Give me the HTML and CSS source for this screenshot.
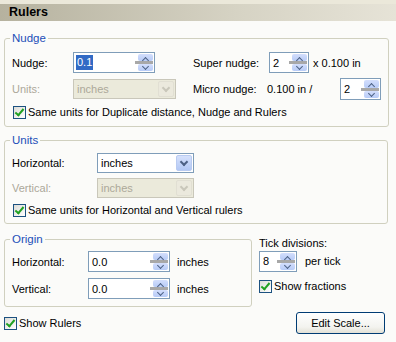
FILE: index.html
```html
<!DOCTYPE html>
<html>
<head>
    <meta charset='utf-8'>
    <title>Rulers</title>
    <link rel="stylesheet" href="styles.css">
</head>
<body>
    <div class="header">Rulers</div>

    <div class="content">
        <fieldset class="group nudge">
            <legend>Nudge</legend>
            <div class="row r-first">
                <span class="lbl w-nudge">Nudge:</span>
                <div class="field w82"><span class="hilite">0.1</span>
                    <div class="spin"><div class="up"></div><div class="mid"></div><div class="down"></div></div>
                </div>
                <span class="lbl w-super">Super nudge:</span>
                <div class="field w40"><span class="val">2</span>
                    <div class="spin"><div class="up"></div><div class="mid"></div><div class="down"></div></div>
                </div>
                <span class="after">x 0.100 in</span>
            </div>
            <div class="row r-second">
                <span class="lbl w-nudge disabled">Units:</span>
                <div class="combo combo-off w103"><span class="val">inches</span><div class="drop"></div></div>
                <span class="lbl w-micro">Micro nudge:</span>
                <span class="lbl w-ratio">0.100 in /</span>
                <div class="field w41 tall"><span class="val">2</span>
                    <div class="spin"><div class="up"></div><div class="mid"></div><div class="down"></div></div>
                </div>
            </div>
            <div class="row check-row">
                <span class="check"></span>
                <span>Same units for Duplicate distance, Nudge and Rulers</span>
            </div>
        </fieldset>

        <fieldset class="group units">
            <legend>Units</legend>
            <div class="row r-units">
                <span class="lbl w-units">Horizontal:</span>
                <div class="combo w97"><span class="val">inches</span><div class="drop"></div></div>
            </div>
            <div class="row r-units next">
                <span class="lbl w-units disabled">Vertical:</span>
                <div class="combo combo-off w97"><span class="val">inches</span><div class="drop"></div></div>
            </div>
            <div class="row check-row">
                <span class="check"></span>
                <span>Same units for Horizontal and Vertical rulers</span>
            </div>
        </fieldset>

        <div class="lower">
            <fieldset class="group origin">
                <legend>Origin</legend>
                <div class="row r-origin">
                    <span class="lbl w-origin">Horizontal:</span>
                    <div class="field w82"><span class="val">0.0</span>
                        <div class="spin"><div class="up"></div><div class="mid"></div><div class="down"></div></div>
                    </div>
                    <span class="unit">inches</span>
                </div>
                <div class="row r-origin next">
                    <span class="lbl w-origin">Vertical:</span>
                    <div class="field w82"><span class="val">0.0</span>
                        <div class="spin"><div class="up"></div><div class="mid"></div><div class="down"></div></div>
                    </div>
                    <span class="unit">inches</span>
                </div>
            </fieldset>

            <div class="ticks">
                <div class="tick-title">Tick divisions:</div>
                <div class="row r-tick">
                    <div class="field w38"><span class="val">8</span>
                        <div class="spin"><div class="up"></div><div class="mid"></div><div class="down"></div></div>
                    </div>
                    <span class="unit">per tick</span>
                </div>
                <div class="row check-row tick-check">
                    <span class="check"></span>
                    <span>Show fractions</span>
                </div>
            </div>
        </div>

        <div class="bottom">
            <div class="row check-row">
                <span class="check"></span>
                <span>Show Rulers</span>
            </div>
            <button class="btn">Edit Scale...</button>
        </div>
    </div>
</body>
</html>
```

FILE: styles.css
```css
* {
    box-sizing: border-box;
}
body {
    margin: 0;
    width: 396px;
    height: 342px;
    overflow: hidden;
    background: #fbfbf9;
    font-family: "Liberation Sans", Arial, sans-serif;
    font-size: 11px;
    color: #000;
}

.header {
    height: 21px;
    border-top: 4px solid #ebe8da;
    padding-left: 9px;
    background: linear-gradient(to right, #b6b29f, #d6d3c4 60%, #e6e3d7);
    font-size: 12.5px;
    font-weight: bold;
    line-height: 17px;
}

.content {
    padding: 0 8px 0 4px;
}

.group {
    margin: 0;
    border: 1px solid #d0d0bf;
    border-radius: 3px;
    padding: 0 7px;
}

.group legend {
    margin-left: -2px;
    padding: 0 2px;
    line-height: 14px;
    color: #1c4fb8;
    font-size: 11.5px;
}

.nudge {
    margin-top: 10px;
    padding-top: 7px;
    padding-bottom: 5px;
}

.units {
    margin-top: 6px;
    padding-top: 6px;
    padding-bottom: 4px;
}

.row {
    display: flex;
    align-items: center;
}

.r-first {
    height: 21px;
}

.r-second {
    height: 22px;
    margin-top: 5px;
}

.r-units {
    height: 20px;
}

.r-units.next {
    margin-top: 5px;
}

.check-row {
    height: 18px;
    margin-top: 3px;
}

.lbl {
    flex-shrink: 0;
}

.w-nudge { width: 61px; }
.w-super { width: 76px; margin-left: 38px; }
.w-micro { width: 74px; margin-left: 17px; }
.w-ratio { width: 73px; }
.w-units { width: 85px; }
.w-origin { width: 76px; }

.disabled {
    color: #aca899;
}

.after {
    margin-left: 4px;
}

.unit {
    margin-left: 7px;
}

/* text boxes with spinners */
.field {
    position: relative;
    height: 21px;
    border: 1px solid #7f9db9;
    background: #fff;
    display: flex;
    align-items: center;
    padding-left: 2px;
}

.field.tall {
    height: 22px;
}

.w82 { width: 82px; }
.w40 { width: 40px; }
.w41 { width: 41px; }
.w38 { width: 38px; }
.w103 { width: 103px; }
.w97 { width: 97px; }

.val {
    padding-left: 1px;
}

.hilite {
    background: #316ac5;
    color: #fff;
    padding: 1px 1px;
    line-height: 13px;
}

.spin {
    position: absolute;
    right: 1px;
    top: 1px;
    bottom: 1px;
    width: 15px;
    display: flex;
    flex-direction: column;
}

.spin .up,
.spin .down {
    flex: 1;
    background: linear-gradient(#d3defc, #b7cbf7);
    border-radius: 2px;
    position: relative;
}

.spin .mid {
    height: 3px;
    margin-left: -3px;
    background: #a8a8a8;
}

.spin .up::after,
.spin .down::after {
    content: "";
    position: absolute;
    left: 5px;
    width: 4px;
    height: 4px;
    border-left: 1.5px solid #4d6185;
    border-top: 1.5px solid #4d6185;
}

.spin .up::after {
    top: 4px;
    transform: rotate(45deg);
}

.spin .down::after {
    top: 0;
    transform: rotate(225deg);
}

/* drop-down boxes */
.combo {
    position: relative;
    height: 20px;
    border: 1px solid #7f9db9;
    background: #fff;
    display: flex;
    align-items: center;
    padding-left: 2px;
}

.combo .drop {
    position: absolute;
    right: 1px;
    top: 1px;
    width: 16px;
    height: 16px;
    border-radius: 2px;
    background: linear-gradient(#d6e1fc, #b3c8f5);
    border: 1px solid #b9cbf1;
}

.combo .drop::after {
    content: "";
    position: absolute;
    left: 4px;
    top: 3px;
    width: 4px;
    height: 4px;
    border-right: 2px solid #4d6185;
    border-bottom: 2px solid #4d6185;
    transform: rotate(45deg);
}

.combo-off {
    background: #ebeadb;
    border-color: #c9c7ba;
    color: #aca899;
}

.combo-off .drop {
    background: #ebe9dd;
    border-color: #e1dfd3;
}

.combo-off .drop::after {
    border-color: #c9c7ba;
}

/* check boxes */
.check {
    position: relative;
    width: 13px;
    height: 13px;
    margin-right: 2px;
    margin-left: 1px;
    border: 1px solid #1c5180;
    background: linear-gradient(135deg, #dcdcd7, #fff);
    flex-shrink: 0;
}

.check::after {
    content: "";
    position: absolute;
    left: 3px;
    top: 0px;
    width: 3px;
    height: 7px;
    border-right: 2px solid #21a121;
    border-bottom: 2px solid #21a121;
    transform: rotate(40deg);
}

/* lower part */
.lower {
    display: flex;
}

.origin {
    width: 248px;
    margin-top: 8px;
    padding-top: 5px;
    padding-bottom: 7px;
}

.r-origin {
    height: 21px;
}

.r-origin.next {
    margin-top: 6px;
}

.ticks {
    margin-left: 7px;
    padding-top: 12px;
}

.tick-title {
    line-height: 14px;
}

.r-tick {
    height: 20px;
    margin-top: 1px;
}

.r-tick .unit {
    margin-left: 8px;
}

.tick-check {
    margin-top: 6px;
}

.tick-check .check {
    margin-left: 0;
}

.bottom {
    display: flex;
    justify-content: space-between;
    align-items: center;
    margin-top: 5px;
    padding-right: 3px;
}

.bottom .check-row {
    margin-top: 0;
}

.bottom .check {
    margin-left: 0;
}

.btn {
    width: 89px;
    height: 22px;
    border: 1px solid #003c74;
    border-radius: 3px;
    background: linear-gradient(#ffffff, #f3f3ef 70%, #e3e1d6);
    font-family: "Liberation Sans", Arial, sans-serif;
    font-size: 11px;
    color: #000;
    padding: 0;
}
```
